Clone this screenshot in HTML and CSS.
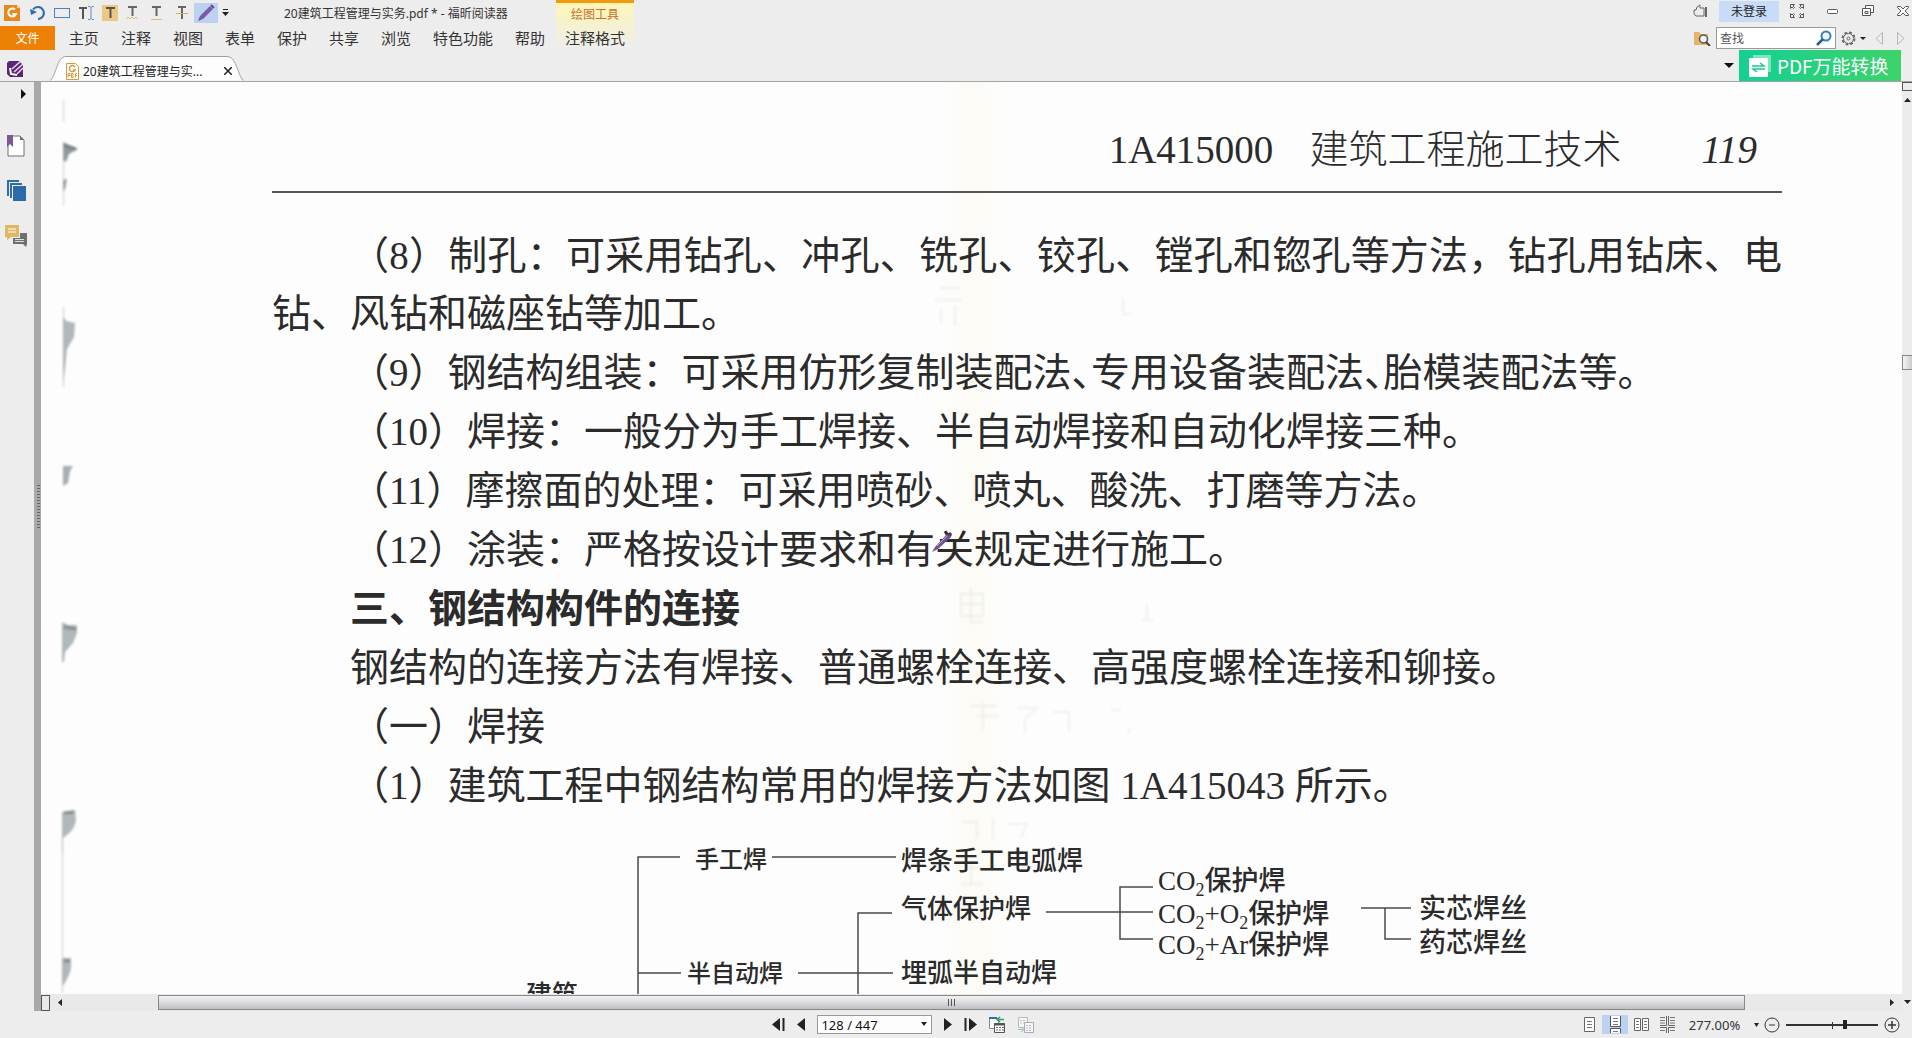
FILE: index.html
```
<!DOCTYPE html>
<html lang="zh-CN">
<head>
    <meta charset="UTF-8">
    <meta name="viewport" content="width=device-width, initial-scale=1.0">
    <title>20建筑工程管理与实务.pdf * - 福昕阅读器</title>
    <link rel="stylesheet" href="styles.css">
</head>
<body>

    <header class="top">
        <div class="top-left">
            <div class="title-row">
                <button class="tool logo" aria-label="福昕阅读器"><svg width="16" height="16"><path d="M0 0h13l3 3v13H0z" fill="#e78a1e"/><path d="M13 0v3h3z" fill="#f7cf9c"/><path d="M11 4.500A4 4 0 1 0 12 9H8.500" fill="none" stroke="#fff" stroke-width="2"/></svg></button>
                <button class="tool" aria-label="撤销"><svg width="16" height="16"><path d="M3 4.500A6 6 0 1 1 8 14" fill="none" stroke="#2d6fae" stroke-width="2"/><path d="M0 4l1 6 6-3z" fill="#2d6fae"/></svg></button>
                <button class="tool" aria-label="矩形"><svg width="16" height="16"><rect x="0.500" y="3.500" width="15" height="9" fill="none" stroke="#4f83b8"/></svg></button>
                <button class="tool" aria-label="选择文本"><svg width="16" height="16"><path d="M1 3h8M5 3v11" stroke="#555" stroke-width="2"/><path d="M10 1.500h2l1 1 1-1h2M13 2v12M10 14.500h2l1-1 1 1h2" fill="none" stroke="#5d8fc0"/></svg></button>
                <button class="tool" aria-label="高亮"><svg width="16" height="16"><rect width="16" height="16" fill="#edc885"/><path d="M4 3h9M8.500 3v10" stroke="#555" stroke-width="2"/></svg></button>
                <button class="tool" aria-label="波浪线"><svg width="16" height="16"><path d="M2 2h9M6.500 2v9" stroke="#666" stroke-width="2"/><path d="M0 14l2-2 2 2 2-2 2 2 2-2 2 2" fill="none" stroke="#e0bd7c"/></svg></button>
                <button class="tool" aria-label="下划线"><svg width="16" height="16"><path d="M2 2h9M6.500 2v9" stroke="#666" stroke-width="2"/><path d="M1 14.500h11" stroke="#e0bd7c"/></svg></button>
                <button class="tool" aria-label="删除线"><svg width="16" height="16"><path d="M4 2h8M8 2v12" stroke="#666" stroke-width="2"/><path d="M2 8.500h12" stroke="#e0a860"/></svg></button>
                <button class="tool active" aria-label="铅笔"><svg width="18" height="18"><path d="M1 17l2-5L13 2l3 3L6 15z" fill="#7b5aa6"/><path d="M14 1l3 3" stroke="#64438f" stroke-width="2"/></svg></button>
                <button class="tool more" aria-label="更多"><svg width="7" height="8"><path d="M1 .5h5" stroke="#222"/><path d="M0 3h7L3.500 7z" fill="#222"/></svg></button>
                <span class="doc-title">20建筑工程管理与实务.pdf * - 福昕阅读器</span>
            </div>
            <nav class="menu">
                <a class="file" href="#">文件</a>
                <a href="#">主页</a>
                <a href="#">注释</a>
                <a href="#">视图</a>
                <a href="#">表单</a>
                <a href="#">保护</a>
                <a href="#">共享</a>
                <a href="#">浏览</a>
                <a href="#">特色功能</a>
                <a href="#">帮助</a>
            </nav>
        </div>
        <div class="context-tab">
            <span>绘图工具</span>
            <a href="#">注释格式</a>
        </div>
        <div class="top-right">
            <div class="window-row">
                <button class="win" aria-label="触摸模式"><svg width="15" height="14"><path d="M1 6h2l1-3 3-2v3h4v8H3c-2-1-2-3-2-6z" fill="none" stroke="#666"/><path d="M12 3h2v10h-2z" fill="#666"/></svg></button>
                <button class="login">未登录</button>
                <button class="win" aria-label="全屏"><svg width="14" height="14" fill="none" stroke="#555"><path d="M.5 4.500v-4h4l-1.500 1.500 1.500 1.500-1 1L2 3zM13.500 4.500v-4h-4L11 2 9.500 3.500l1 1L12 3zM.5 9.500v4h4L3 12l1.500-1.500-1-1L2 11zM13.500 9.500v4h-4L11 12l-1.500-1.500 1-1L12 11z"/></svg></button>
                <button class="win" aria-label="最小化"><svg width="12" height="12"><rect x=".5" y="4.500" width="10" height="4" rx="1" fill="#fff" stroke="#555"/></svg></button>
                <button class="win" aria-label="还原"><svg width="12" height="12" fill="#fff" stroke="#555"><path d="M3.500.5h8v7h-8z"/><path d="M.5 3.500h8v7h-8z"/><path d="M3 6.500h3v2H3z"/></svg></button>
                <button class="win" aria-label="关闭"><svg width="12" height="12"><path d="M.5 1.500h3L6 4l2.500-2.500h3v1L8 6l3.500 3.500v1h-3L6 8l-2.500 2.500h-3v-1L4 6 .5 2.500z" fill="#fff" stroke="#555"/></svg></button>
            </div>
            <div class="search-row">
                <button class="folder" aria-label="查找文件夹"><svg width="17" height="15"><path d="M0 1h5l2 2h7v11H0z" fill="#e4b566"/><circle cx="9.500" cy="8" r="4" fill="#f4f4f4" stroke="#555" stroke-width="1.500"/><path d="M12 11l4 4" stroke="#444" stroke-width="2"/></svg></button>
                <label class="search">
                    <input type="text" placeholder="查找" aria-label="查找">
                    <svg width="16" height="16"><circle cx="10" cy="6" r="4.500" fill="#eef6fb" stroke="#3b80b5" stroke-width="2"/><path d="M7 9l-6 6" stroke="#2c5d86" stroke-width="2.500"/></svg>
                </label>
                <button class="gear" aria-label="设置"><svg width="25" height="15"><circle cx="7.500" cy="7.500" r="6" fill="none" stroke="#666" stroke-width="2" stroke-dasharray="2.700 2"/><circle cx="7.500" cy="7.500" r="5" fill="#eee" stroke="#666"/><circle cx="7.500" cy="7.500" r="1.500" fill="none" stroke="#666"/><path d="M19 6h6l-3 3z" fill="#222"/></svg></button>
                <button class="arrow" aria-label="上一个"><svg width="8" height="13"><path d="M7.500.5v12L1 6.500z" fill="none" stroke="#b5b5b5"/></svg></button>
                <button class="arrow" aria-label="下一个"><svg width="8" height="13"><path d="M.5.5v12l6.500-6z" fill="none" stroke="#b5b5b5"/></svg></button>
            </div>
            <div class="promo-row">
                <svg width="10" height="5"><path d="M0 0h10L5 5z" fill="#111"/></svg>
                <a class="promo" href="#">
                    <svg width="22" height="22"><path d="M4 0h18v17H4z" fill="#7ce8be"/><rect y="3" width="19" height="19" rx="1" fill="#fff"/><path d="M3 11h12l-4-3M16 14H4l4 3" fill="none" stroke="#18c98c" stroke-width="1.500"/></svg>
                    <span>PDF万能转换</span>
                </a>
            </div>
        </div>
        <div class="tabs">
            <button class="tool skin" aria-label="皮肤"><svg width="16" height="16"><path d="M2 0h10l4 4v12H3l-3-3V2z" fill="#5b2572"/><path d="M14 0L5 8M16 3L7 11M16 7l-6 6" stroke="#e8d8ee" stroke-width="1.500"/><path d="M3 7l1 6 6 1" fill="none" stroke="#fff" stroke-width="2"/></svg></button>
            <div class="doc-tab">
                <svg class="tab-shape" width="194" height="25"><path d="M.5 24.500C7 17 7 .5 16 .5h161c9 0 10 16 16 24" fill="#fdfdfd" stroke="#a0a0a0"/></svg>
                <svg class="tab-icon" width="13" height="17"><path d="M.5.500h9l3 3v13H.5z" fill="#fff" stroke="#d99a3c"/><path d="M9 4a3 3 0 1 0 0 3H7" fill="none" stroke="#d99a3c" stroke-width="1.500"/><path d="M2 14.500v-4h2v2H2M5.500 10.500h1.500v4H5.500zM9.500 14.500v-4H11M9.500 12.500H11" fill="none" stroke="#d99a3c"/></svg>
                <a href="#">20建筑工程管理与实...</a>
                <button aria-label="关闭标签"><svg width="8" height="8"><path d="M0 0l8 8M8 0L0 8" stroke="#222" stroke-width="1.500"/></svg></button>
            </div>
        </div>
    </header>

    <div class="workspace">
        <aside class="sidebar">
            <button class="expand" aria-label="展开"><svg width="5" height="10"><path d="M0 0v10l5-5z" fill="#111"/></svg></button>
            <button aria-label="书签"><svg width="18" height="22"><path d="M1 1h12l4 4v16H1z" fill="#fff" stroke="#707070"/><path d="M13 1v4h4z" fill="#707070"/><path d="M0 0h6v12l-3-3-3 3z" fill="#7c5795"/></svg></button>
            <button aria-label="页面"><svg width="19" height="22"><path d="M0 0h12v2H2v14H0z" fill="#2f6da5"/><path d="M3 3h12v2H5v13H3z" fill="#2f6da5"/><path d="M6 6h13v15H6z" fill="#2c6aac"/></svg></button>
            <button aria-label="注释"><svg width="23" height="22"><path d="M0 0h14v12H6l-4 3v-3H0z" fill="#e0b765"/><path d="M3 4h8M3 7h8" stroke="#fff"/><path d="M15 8h7v11l-1 3-3-3H8v-6h7z" fill="#707070"/><path d="M10 14.500h9M10 16.500h9" stroke="#ddd"/></svg></button>
        </aside>
        <div class="splitter"><span></span></div>

        <main class="viewer">
            <article class="page">
                <!-- ink marks of the binding edge -->
                <svg class="edge" width="20" height="911">
                    <g fill="#8f9a9e">
                        <path d="M1 50v10l4 2 11 5-9 5-3 8-3-2z"/>
                        <path d="M1 98l4-1-2 10-2 3z"/>
                        <path d="M1 234l3 5 9 2-1 14-7 12-2 20-2 16z" opacity=".7"/>
                        <path d="M1 384h10l-3 5-2 12-5 3z" opacity=".8"/>
                        <path d="M0 540l6 3h9v8l-4 10-8 9-1 10H0z" opacity=".7"/>
                        <path d="M0 730l13-2 1 10c-2 11-8 14-13 18v16H0z" opacity=".7"/>
                        <path d="M0 876h9v8c0 8-5 14-8 20H0z" opacity=".7"/>
                    </g>
                    <path d="M1.500 18v22M1.500 60v64M1.500 225v80M.5 772v139" stroke="#a9b0b2" opacity=".6"/>
                    <path d="M2 63l12 4M2 545l12 2M2 731l10-1M2 879h6" stroke="#68716f" stroke-width="3" opacity=".6"/>
                </svg>
                <!-- print showing through from the other side -->
                <svg class="bleed" width="240" height="780" fill="none" stroke="#8a8a70" stroke-width="2">
                    <path d="M18 80h20M14 92h26M20 100v16M34 98v20M202 90v16h8"/>
                    <path d="M40 386h22v22H40zM40 396h22M50 380v34h12M226 396v16M220 412h12"/>
                    <path d="M50 498h26M56 508h22M62 494v28M96 500h20l-12 10v14M132 504h16v20M190 502h10M208 520v6"/>
                    <path d="M40 614h16v16M72 610v22M88 616h18l-6 14M44 660h20M50 652v26M40 676h22"/>
                </svg>

                <div class="page-head">
                    <span>1A415000</span>
                    <span class="chapter">建筑工程施工技术</span>
                    <i>119</i>
                </div>
                <div class="body-text">
                    <p>（8）制孔：可采用钻孔、冲孔、铣孔、铰孔、镗孔和锪孔等方法，钻孔用钻床、电钻、风钻和磁座钻等加工。</p>
                    <p>（9）钢结构组装：可采用仿形复制装配法<span class="half">、</span>专用设备装配法<span class="half">、</span>胎模装配法等。</p>
                    <p>（10）焊接：一般分为手工焊接、半自动焊接和自动化焊接三种。</p>
                    <p>（11）摩擦面的处理：可采用喷砂、喷丸、酸洗、打磨等方法。</p>
                    <p>（12）涂装：严格按设计要求和有关规定进行施工。</p>
                    <h2>三、钢结构构件的连接</h2>
                    <p>钢结构的连接方法有焊接、普通螺栓连接、高强度螺栓连接和铆接。</p>
                    <p>（一）焊接</p>
                    <p>（1）建筑工程中钢结构常用的焊接方法如图 1A415043 所示。</p>
                </div>

                <div class="diagram">
                    <svg class="lines" width="1200" height="200" fill="none" stroke="#4a4a4a" stroke-width="1.500">
                        <path d="M408 41h-42v159M366 157h43M500 41h124M526 157h95M620 97h-34v103"/>
                        <path d="M774 96h107M881 71h-33v52h33M1089 92h50M1113 92v31h26"/>
                    </svg>
                    <span class="node n-root">建筑</span>
                    <span class="node n-manual">手工焊</span>
                    <span class="node n-semi">半自动焊</span>
                    <span class="node n-arc">焊条手工电弧焊</span>
                    <span class="node n-gas">气体保护焊</span>
                    <span class="node n-sub">埋弧半自动焊</span>
                    <span class="node n-co2">CO<sub>2</sub>保护焊</span>
                    <span class="node n-o2">CO<sub>2</sub>+O<sub>2</sub>保护焊</span>
                    <span class="node n-ar">CO<sub>2</sub>+Ar保护焊</span>
                    <span class="node n-solid">实芯焊丝</span>
                    <span class="node n-flux">药芯焊丝</span>
                </div>

                <svg class="cursor" width="22" height="22"><path d="M1 21l3-5L16 3l4 3L7 18z" fill="#6f5590"/><path d="M6 15L16 5" stroke="#b9a8d2"/><path d="M16 3l3-2 2 2-1 3z" fill="#4a3a60"/></svg>
            </article>

            <div class="hscroll">
                <span class="box"></span>
                <button class="hs-arrow" aria-label="向左"><svg width="4" height="7"><path d="M4 0v7L0 3.500z" fill="#222"/></svg></button>
                <div class="h-track"><div class="h-thumb"><svg width="8" height="7"><path d="M.5 0v7M3.500 0v7M6.500 0v7" stroke="#555"/></svg></div></div>
                <button class="hs-arrow" aria-label="向右"><svg width="4" height="7"><path d="M0 0v7l4-3.500z" fill="#222"/></svg></button>
            </div>
        </main>

        <div class="vscroll">
            <span class="vbox"></span>
            <svg width="7" height="4"><path d="M0 4h7L3.500 0z" fill="#222"/></svg>
            <div class="v-track"><div class="v-thumb"></div></div>
            <svg width="7" height="4"><path d="M0 0h7L3.500 4z" fill="#222"/></svg>
        </div>
    </div>

    <footer class="status">
        <div class="pager">
            <button aria-label="首页"><svg width="13" height="13"><path d="M8 0v13L0 6.500z" fill="#222"/><path d="M11.500 0v13" stroke="#222" stroke-width="2"/></svg></button>
            <button aria-label="上一页"><svg width="8" height="13"><path d="M8 0v13L0 6.500z" fill="#222"/></svg></button>
            <div class="page-select">
                <select aria-label="页码"><option>128 / 447</option></select>
                <svg width="6" height="4"><path d="M0 0h6L3 4z" fill="#222"/></svg>
            </div>
            <button aria-label="下一页"><svg width="8" height="13"><path d="M0 0v13l8-6.500z" fill="#222"/></svg></button>
            <button aria-label="末页"><svg width="13" height="13"><path d="M5 0v13l8-6.500z" fill="#222"/><path d="M1.500 0v13" stroke="#222" stroke-width="2"/></svg></button>
            <button aria-label="后退"><svg width="17" height="17"><path d="M.5 2.500h9v10h-9z" fill="#fff" stroke="#888"/><path d="M0 2h8" stroke="#2d6fae" stroke-width="2"/><path d="M9 3.500h6M11 1L8 3.500 11 6" stroke="#2fa06e" fill="none" stroke-width="1.500"/><path d="M5.500 7.500h10v9h-10z" fill="#fff" stroke="#555"/><path d="M5 8.500h11" stroke="#555" stroke-width="2"/><path d="M7 11.500h8M7 14h8" stroke="#666" stroke-dasharray="2 1"/></svg></button>
            <button aria-label="前进"><svg width="17" height="17" opacity=".5"><path d="M.5 1.500h9v10h-9z" fill="#fff" stroke="#888"/><path d="M2 4.500h6M2 7h6" stroke="#999" stroke-dasharray="2 1"/><path d="M6.500 6.500h9v10h-9z" fill="#fff" stroke="#668"/><path d="M8 9.500h6M8 12h6M8 14.500h6" stroke="#88a" stroke-dasharray="2 1"/><path d="M0 13.500h5M3 11l3 2.500L3 16" fill="none" stroke="#4a9a90"/></svg></button>
        </div>
        <div class="view">
            <button aria-label="单页"><svg width="11" height="15"><path d="M.5.5h10v14H.5z" fill="#fff" stroke="#666"/><path d="M3 4.500h5M3 7.500h5M3 10.500h5" stroke="#777"/></svg></button>
            <button class="active" aria-label="连续"><svg width="11" height="17"><path d="M.5 0v10.500h10V0M.5 17v-4.500h10V17" fill="#fff" stroke="#555"/><path d="M3 2.500h5M3 5.500h5M3 8.500h5M3 15.500h5" stroke="#777"/></svg></button>
            <button aria-label="双页"><svg width="15" height="13"><path d="M.5.5h6v12h-6zM8.500.5h6v12h-6z" fill="#fff" stroke="#666"/><path d="M2 3.500h3M2 6.500h3M2 9.500h3M10 3.500h3M10 6.500h3M10 9.500h3" stroke="#777"/></svg></button>
            <button aria-label="连续双页"><svg width="15" height="17"><path d="M6.500 0v9.500H0M8.500 0v9.500H15M6.500 17v-5.500H0M8.500 17v-5.500H15" fill="none" stroke="#666"/><path d="M0 1.500h5M0 4.500h5M0 7h5M10 1.500h5M10 4.500h5M10 7h5M0 14.500h5M10 14.500h5" stroke="#777"/></svg></button>
            <button class="zoom-value">277.00%<svg width="5" height="4"><path d="M0 0h5L2.500 4z" fill="#222"/></svg></button>
            <button class="round" aria-label="缩小"><svg width="16" height="16" fill="none" stroke="#333"><circle cx="8" cy="8" r="7"/><path d="M5 8h6"/></svg></button>
            <div class="slider"><input type="range" aria-label="缩放" min="0" max="100" value="65"><span></span></div>
            <button class="round" aria-label="放大"><svg width="16" height="16" fill="none" stroke="#333"><circle cx="8" cy="8" r="7"/><path d="M4 8h8M8 4v8" stroke-width="1.500"/></svg></button>
        </div>
    </footer>

</body>
</html>
```
FILE: styles.css
```
* {
    box-sizing: border-box;
}

body {
    margin: 0;
    height: 100vh;
    display: flex;
    flex-direction: column;
    overflow: hidden;
    background-color: #ededed;
    color: #333;
    font-family: "Noto Sans", "Noto Sans CJK SC", sans-serif;
    font-size: 12px;
}

a {
    color: inherit;
    text-decoration: none;
}

button {
    display: flex;
    align-items: center;
    justify-content: center;
    padding: 0;
    border: 0;
    background: none;
    color: inherit;
    font: inherit;
}

svg {
    display: block;
    flex-shrink: 0;
}

/* top bar */
.top {
    display: grid;
    grid-template-columns: auto auto 1fr;
    grid-template-rows: 56px 25px;
    border-bottom: 1px solid #a3a3a3;
}

.top-left {
    width: 556px;
}

.title-row {
    display: flex;
    align-items: center;
    height: 26px;
}

.tool {
    width: 24px;
    height: 20px;
}

.logo {
    margin-right: 2px;
}

.tool.active,
.view .active {
    background-color: #bdd2f2;
}

.tool.more {
    width: 14px;
}

.doc-title {
    margin-left: 52px;
    white-space: nowrap;
}

.menu {
    display: flex;
    height: 24px;
    font-size: 15px;
    line-height: 25px;
}

.menu a {
    padding: 0 11px;
    white-space: nowrap;
}

.menu .file {
    width: 61px;
    margin-right: 3px;
    padding: 0;
    background-color: #ec8105;
    color: #fff;
    font-size: 12px;
    text-align: center;
}

.context-tab {
    width: 78px;
    height: 50px;
    border-top: 3px solid #f39a10;
    background: linear-gradient(#fdf6b8, #ededed);
    text-align: center;
}

.context-tab span {
    display: block;
    height: 23px;
    color: #c8711f;
    line-height: 23px;
}

.context-tab a {
    font-size: 15px;
    line-height: 25px;
}

.top-right {
    grid-row: 1 / 3;
    grid-column: 3;
    justify-self: end;
    width: 222px;
}

.window-row {
    display: flex;
    align-items: center;
    gap: 11px;
    height: 22px;
    padding-left: 3px;
}

.win + .win {
    margin-left: 12px;
}

.login {
    width: 60px;
    height: 21px;
    background-color: #c9dcf7;
    color: #222;
}

.search-row {
    display: flex;
    align-items: center;
    gap: 5px;
    height: 28px;
    padding: 4px 3px 0 4px;
}

.search {
    display: flex;
    align-items: center;
    width: 120px;
    height: 22px;
    padding: 0 3px;
    border: 1px solid #999;
    background-color: #fff;
}

.search input {
    flex: 1;
    min-width: 0;
    padding: 0;
    border: 0;
    outline: 0;
    background: none;
    font: inherit;
}

.search input::placeholder {
    color: #555;
}

.arrow {
    flex: 1;
}

.promo-row {
    display: flex;
    align-items: center;
    justify-content: flex-end;
    gap: 5px;
    height: 31px;
    padding-right: 11px;
}

.promo {
    display: flex;
    align-items: center;
    gap: 6px;
    width: 162px;
    height: 31px;
    padding-left: 10px;
    background: linear-gradient(90deg, #14cf92, #3dd36a);
    color: #fff;
    font-family: "Noto Sans CJK SC", sans-serif;
    font-size: 19px;
    line-height: 28px;
}

.tabs {
    grid-row: 2;
    grid-column: 1 / 3;
    display: flex;
    align-items: center;
}

.skin {
    width: 32px;
    padding-right: 2px;
    margin-right: 18px;
}

.doc-tab {
    position: relative;
    display: flex;
    align-items: center;
    width: 194px;
    height: 25px;
    padding: 5px 12px 0 16px;
    color: #222;
}

.doc-tab > * {
    position: relative;
}

.doc-tab .tab-shape {
    position: absolute;
    left: 0;
    top: 0;
}

.doc-tab a {
    flex: 1;
    margin-left: 4px;
}

/* left panel */
.workspace {
    flex: 1;
    display: flex;
    min-height: 0;
}

.sidebar {
    display: flex;
    flex-direction: column;
    align-items: center;
    gap: 23px;
    width: 34px;
    padding: 6px 2px 0 0;
}

.sidebar .expand {
    height: 12px;
    margin: 0 0 12px 14px;
}

.splitter {
    display: flex;
    align-items: center;
    width: 7px;
    padding-left: 3px;
    padding-bottom: 80px;
    background-color: #a9a9a9;
}

.splitter span {
    width: 3px;
    height: 44px;
    background-image: repeating-linear-gradient(#666 0 1px, #a9a9a9 1px 3px);
}

/* document */
.viewer {
    flex: 1;
    display: flex;
    flex-direction: column;
    min-width: 0;
}

.page {
    position: relative;
    flex: 1;
    min-height: 0;
    overflow: hidden;
    padding: 39px 120px 0 231px;
    background: linear-gradient(90deg, #fdfdfd 48%, #fcfbf5 50%, #fdfdfd 52%);
    color: #2b2b2b;
    font-family: "Liberation Serif", "Noto Sans CJK SC", serif;
    font-size: 39px;
    line-height: 58px;
}

.edge,
.bleed {
    position: absolute;
    left: 21px;
    top: 0;
    filter: blur(1px);
}

.bleed {
    left: 880px;
    top: 126px;
    opacity: 0.1;
}

.page-head {
    display: flex;
    justify-content: flex-end;
    height: 72px;
    padding-right: 25px;
    border-bottom: 2px solid #555;
}

.chapter {
    margin: 0 80px 0 36px;
    font-weight: 300;
}

.body-text {
    padding-top: 34px;
}

.body-text p,
.body-text h2 {
    margin: 0 0 1px;
    font-size: 39px;
    text-indent: 78px;
    text-align: justify;
}

.half {
    font-feature-settings: "halt";
}

.diagram {
    position: relative;
    height: 200px;
    font-size: 26px;
    font-weight: 500;
    line-height: 32px;
    white-space: nowrap;
}

.lines,
.node {
    position: absolute;
    left: 0;
    top: 0;
}

.node sub {
    font-size: 18px;
    line-height: 0;
}

.n-root { left: 254px; top: 164px; }
.n-manual { left: 423px; top: 28px; font-size: 24px; }
.n-semi { left: 415px; top: 142px; font-size: 24px; }
.n-arc { left: 629px; top: 30px; }
.n-gas { left: 629px; top: 78px; }
.n-sub { left: 629px; top: 142px; }
.n-co2 { left: 886px; top: 49px; }
.n-o2 { left: 886px; top: 82px; }
.n-ar { left: 886px; top: 113px; }
.n-solid { left: 1147px; top: 77px; }
.n-flux { left: 1147px; top: 111px; }

.n-co2,
.n-o2,
.n-ar,
.n-solid,
.n-flux {
    font-size: 27px;
}

.cursor {
    position: absolute;
    left: 890px;
    top: 449px;
}

/* scrollbars */
.hscroll {
    display: flex;
    align-items: center;
    height: 17px;
    background-color: #e9e9e9;
}

.box {
    width: 9px;
    height: 16px;
    border: 1px solid #555;
}

.hs-arrow {
    width: 20px;
    height: 17px;
}

.h-track {
    flex: 1;
    padding: 0 137px 0 88px;
}

.h-thumb {
    display: flex;
    align-items: center;
    justify-content: center;
    height: 15px;
    border: 1px solid #888;
    background: linear-gradient(#f2f2f4, #dcdcdf 50%, #bdbdc2);
}

.vscroll {
    display: flex;
    flex-direction: column;
    align-items: center;
    width: 10px;
    padding-bottom: 7px;
    background-color: #ececec;
}

.vbox {
    width: 100%;
    height: 9px;
    margin-bottom: 7px;
    border: 1px solid #555;
    border-right: 0;
}

.v-track {
    flex: 1;
    width: 100%;
    padding-top: 253px;
}

.v-thumb {
    height: 15px;
    border: 1px solid #888;
    border-right: 0;
    background: linear-gradient(90deg, #f4f4f4, #ccc);
}

/* status bar */
.status {
    display: flex;
    align-items: center;
    justify-content: space-between;
    height: 27px;
    padding: 0 12px 0 40.4%;
    font-size: 13px;
}

.pager {
    display: flex;
    align-items: center;
    gap: 12px;
}

.page-select {
    position: relative;
}

.page-select select {
    width: 115px;
    height: 19px;
    padding: 0 3px;
    border: 1px solid #999;
    border-radius: 0;
    background-color: #fdfdfd;
    color: #111;
    font: inherit;
    line-height: 16px;
    appearance: none;
}

.page-select svg {
    position: absolute;
    right: 5px;
    top: 7px;
}

.view {
    display: flex;
    align-items: center;
}

.view button {
    width: 26px;
    height: 19px;
}

.view .zoom-value {
    width: 80px;
    gap: 14px;
    margin-left: 4px;
}

.view .round {
    width: 16px;
}

.slider {
    position: relative;
    display: flex;
    width: 92px;
    margin: 0 6px;
}

.slider input {
    width: 100%;
    height: 16px;
    margin: 0;
    appearance: none;
    background: linear-gradient(#333, #333) center / 100% 2px no-repeat;
}

.slider input::-webkit-slider-thumb {
    width: 4px;
    height: 9px;
    appearance: none;
    background-color: #222;
}

.slider span {
    position: absolute;
    left: 50%;
    top: 5px;
    width: 1px;
    height: 7px;
    background-color: #333;
}
```
